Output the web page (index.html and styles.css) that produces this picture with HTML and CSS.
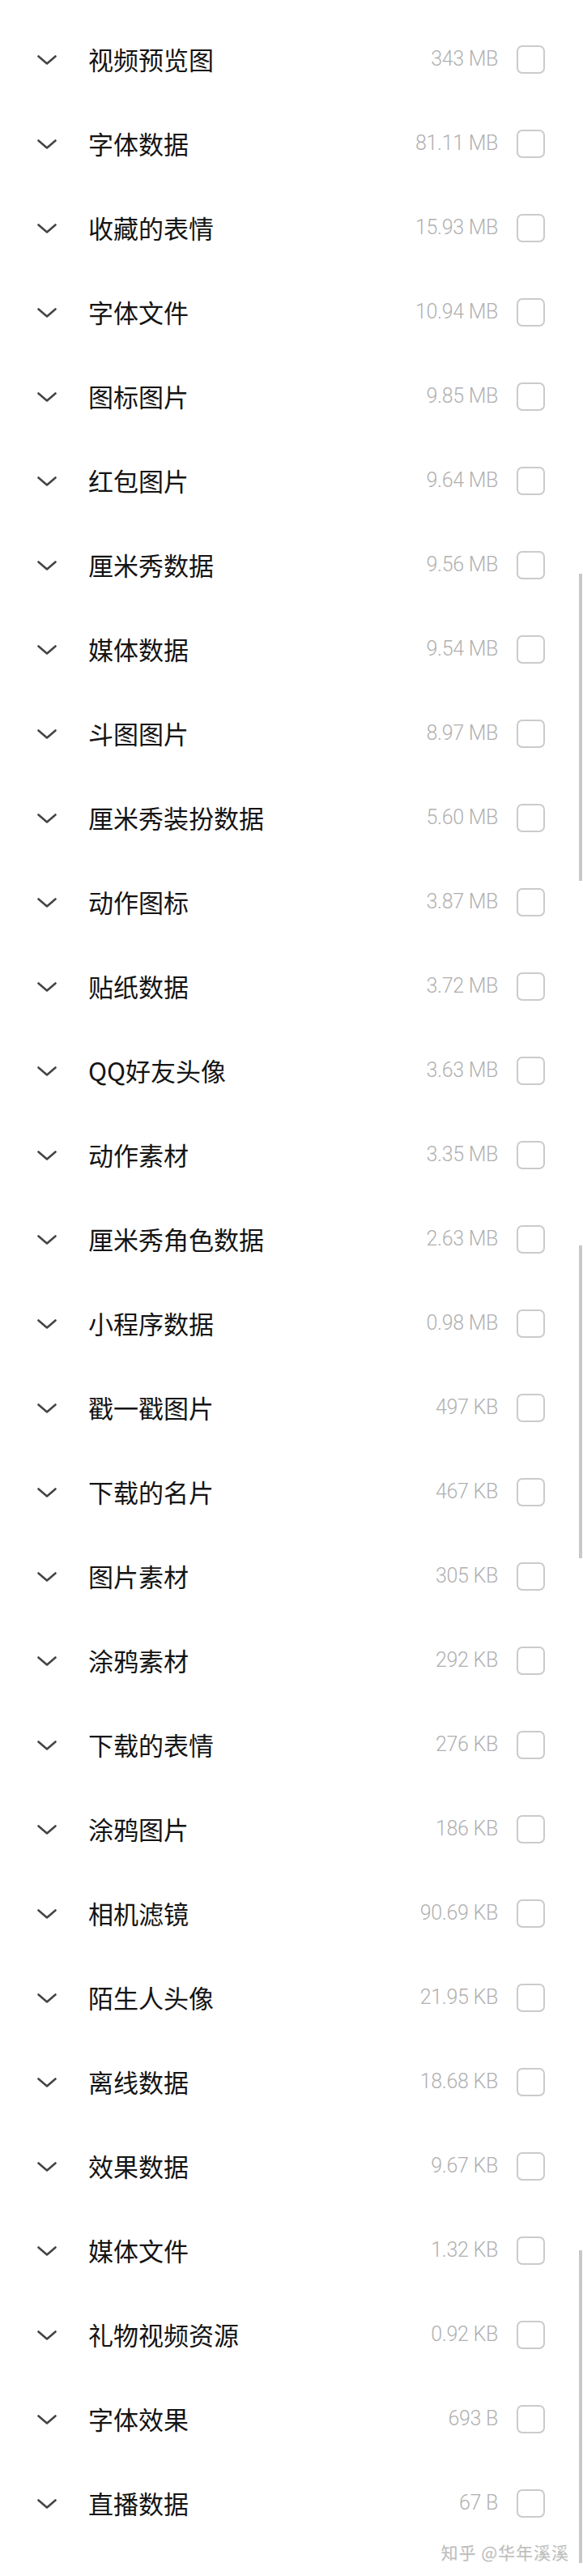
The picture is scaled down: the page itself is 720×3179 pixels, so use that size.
FILE: index.html
```html
<!DOCTYPE html>
<html lang="zh-CN">
<head>
<meta charset="utf-8">
<title>存储空间</title>
<link rel="stylesheet" href="styles.css">
</head>
<body>
<div class="page">
  <ul class="list" id="list">
    <li class="row"><span class="chev"><svg viewBox="0 0 24 12"><path d="M1.5 1.5 L12 10.5 L22.5 1.5"/></svg></span><span class="name">视频预览图</span><span class="size">343 MB</span><span class="box"></span></li>
    <li class="row"><span class="chev"><svg viewBox="0 0 24 12"><path d="M1.5 1.5 L12 10.5 L22.5 1.5"/></svg></span><span class="name">字体数据</span><span class="size">81.11 MB</span><span class="box"></span></li>
    <li class="row"><span class="chev"><svg viewBox="0 0 24 12"><path d="M1.5 1.5 L12 10.5 L22.5 1.5"/></svg></span><span class="name">收藏的表情</span><span class="size">15.93 MB</span><span class="box"></span></li>
    <li class="row"><span class="chev"><svg viewBox="0 0 24 12"><path d="M1.5 1.5 L12 10.5 L22.5 1.5"/></svg></span><span class="name">字体文件</span><span class="size">10.94 MB</span><span class="box"></span></li>
    <li class="row"><span class="chev"><svg viewBox="0 0 24 12"><path d="M1.5 1.5 L12 10.5 L22.5 1.5"/></svg></span><span class="name">图标图片</span><span class="size">9.85 MB</span><span class="box"></span></li>
    <li class="row"><span class="chev"><svg viewBox="0 0 24 12"><path d="M1.5 1.5 L12 10.5 L22.5 1.5"/></svg></span><span class="name">红包图片</span><span class="size">9.64 MB</span><span class="box"></span></li>
    <li class="row"><span class="chev"><svg viewBox="0 0 24 12"><path d="M1.5 1.5 L12 10.5 L22.5 1.5"/></svg></span><span class="name">厘米秀数据</span><span class="size">9.56 MB</span><span class="box"></span></li>
    <li class="row"><span class="chev"><svg viewBox="0 0 24 12"><path d="M1.5 1.5 L12 10.5 L22.5 1.5"/></svg></span><span class="name">媒体数据</span><span class="size">9.54 MB</span><span class="box"></span></li>
    <li class="row"><span class="chev"><svg viewBox="0 0 24 12"><path d="M1.5 1.5 L12 10.5 L22.5 1.5"/></svg></span><span class="name">斗图图片</span><span class="size">8.97 MB</span><span class="box"></span></li>
    <li class="row"><span class="chev"><svg viewBox="0 0 24 12"><path d="M1.5 1.5 L12 10.5 L22.5 1.5"/></svg></span><span class="name">厘米秀装扮数据</span><span class="size">5.60 MB</span><span class="box"></span></li>
    <li class="row"><span class="chev"><svg viewBox="0 0 24 12"><path d="M1.5 1.5 L12 10.5 L22.5 1.5"/></svg></span><span class="name">动作图标</span><span class="size">3.87 MB</span><span class="box"></span></li>
    <li class="row"><span class="chev"><svg viewBox="0 0 24 12"><path d="M1.5 1.5 L12 10.5 L22.5 1.5"/></svg></span><span class="name">贴纸数据</span><span class="size">3.72 MB</span><span class="box"></span></li>
    <li class="row"><span class="chev"><svg viewBox="0 0 24 12"><path d="M1.5 1.5 L12 10.5 L22.5 1.5"/></svg></span><span class="name">QQ好友头像</span><span class="size">3.63 MB</span><span class="box"></span></li>
    <li class="row"><span class="chev"><svg viewBox="0 0 24 12"><path d="M1.5 1.5 L12 10.5 L22.5 1.5"/></svg></span><span class="name">动作素材</span><span class="size">3.35 MB</span><span class="box"></span></li>
    <li class="row"><span class="chev"><svg viewBox="0 0 24 12"><path d="M1.5 1.5 L12 10.5 L22.5 1.5"/></svg></span><span class="name">厘米秀角色数据</span><span class="size">2.63 MB</span><span class="box"></span></li>
    <li class="row"><span class="chev"><svg viewBox="0 0 24 12"><path d="M1.5 1.5 L12 10.5 L22.5 1.5"/></svg></span><span class="name">小程序数据</span><span class="size">0.98 MB</span><span class="box"></span></li>
    <li class="row"><span class="chev"><svg viewBox="0 0 24 12"><path d="M1.5 1.5 L12 10.5 L22.5 1.5"/></svg></span><span class="name">戳一戳图片</span><span class="size">497 KB</span><span class="box"></span></li>
    <li class="row"><span class="chev"><svg viewBox="0 0 24 12"><path d="M1.5 1.5 L12 10.5 L22.5 1.5"/></svg></span><span class="name">下载的名片</span><span class="size">467 KB</span><span class="box"></span></li>
    <li class="row"><span class="chev"><svg viewBox="0 0 24 12"><path d="M1.5 1.5 L12 10.5 L22.5 1.5"/></svg></span><span class="name">图片素材</span><span class="size">305 KB</span><span class="box"></span></li>
    <li class="row"><span class="chev"><svg viewBox="0 0 24 12"><path d="M1.5 1.5 L12 10.5 L22.5 1.5"/></svg></span><span class="name">涂鸦素材</span><span class="size">292 KB</span><span class="box"></span></li>
    <li class="row"><span class="chev"><svg viewBox="0 0 24 12"><path d="M1.5 1.5 L12 10.5 L22.5 1.5"/></svg></span><span class="name">下载的表情</span><span class="size">276 KB</span><span class="box"></span></li>
    <li class="row"><span class="chev"><svg viewBox="0 0 24 12"><path d="M1.5 1.5 L12 10.5 L22.5 1.5"/></svg></span><span class="name">涂鸦图片</span><span class="size">186 KB</span><span class="box"></span></li>
    <li class="row"><span class="chev"><svg viewBox="0 0 24 12"><path d="M1.5 1.5 L12 10.5 L22.5 1.5"/></svg></span><span class="name">相机滤镜</span><span class="size">90.69 KB</span><span class="box"></span></li>
    <li class="row"><span class="chev"><svg viewBox="0 0 24 12"><path d="M1.5 1.5 L12 10.5 L22.5 1.5"/></svg></span><span class="name">陌生人头像</span><span class="size">21.95 KB</span><span class="box"></span></li>
    <li class="row"><span class="chev"><svg viewBox="0 0 24 12"><path d="M1.5 1.5 L12 10.5 L22.5 1.5"/></svg></span><span class="name">离线数据</span><span class="size">18.68 KB</span><span class="box"></span></li>
    <li class="row"><span class="chev"><svg viewBox="0 0 24 12"><path d="M1.5 1.5 L12 10.5 L22.5 1.5"/></svg></span><span class="name">效果数据</span><span class="size">9.67 KB</span><span class="box"></span></li>
    <li class="row"><span class="chev"><svg viewBox="0 0 24 12"><path d="M1.5 1.5 L12 10.5 L22.5 1.5"/></svg></span><span class="name">媒体文件</span><span class="size">1.32 KB</span><span class="box"></span></li>
    <li class="row"><span class="chev"><svg viewBox="0 0 24 12"><path d="M1.5 1.5 L12 10.5 L22.5 1.5"/></svg></span><span class="name">礼物视频资源</span><span class="size">0.92 KB</span><span class="box"></span></li>
    <li class="row"><span class="chev"><svg viewBox="0 0 24 12"><path d="M1.5 1.5 L12 10.5 L22.5 1.5"/></svg></span><span class="name">字体效果</span><span class="size">693 B</span><span class="box"></span></li>
    <li class="row"><span class="chev"><svg viewBox="0 0 24 12"><path d="M1.5 1.5 L12 10.5 L22.5 1.5"/></svg></span><span class="name">直播数据</span><span class="size">67 B</span><span class="box"></span></li>
  </ul>
  <div class="watermark">知乎 @华年溪溪</div>
  <div class="scrollbar sb1"></div>
  <div class="scrollbar sb2"></div>
  <div class="scrollbar sb3"></div>
</div>
</body>
</html>
```
FILE: styles.css
```css
html, body {
  margin: 0;
  padding: 0;
  background: #ffffff;
}
.page {
  position: relative;
  width: 720px;
  height: 3179px;
  overflow: hidden;
  background: #ffffff;
  font-family: "Noto Sans CJK SC", "Noto Sans", sans-serif;
}
.list {
  list-style: none;
  margin: 0;
  padding: 21px 0 0 0;
}
.row {
  display: flex;
  align-items: center;
  height: 104px;
  padding: 0 47px 0 46px;
}
.chev {
  display: flex;
  width: 24px;
  height: 12px;
  margin-top: 2px;
}
.chev svg {
  width: 24px;
  height: 12px;
  fill: none;
  stroke: #444444;
  stroke-width: 2.6;
  stroke-linecap: round;
  stroke-linejoin: round;
}
.name {
  margin-left: 39px;
  flex: 1;
  font-size: 31px;
  line-height: 40px;
  color: #141414;
}
.size {
  font-family: "Roboto", "Liberation Sans", sans-serif;
  font-size: 25px;
  line-height: 30px;
  color: #b0b0b0;
  font-weight: 300;
  letter-spacing: -0.3px;
}
.box {
  width: 31px;
  height: 31px;
  margin-left: 23px;
  border: 2px solid #cbcbcb;
  border-radius: 7px;
}
.watermark {
  margin-top: -5px;
  padding-right: 17px;
  text-align: right;
  font-size: 21px;
  line-height: 26px;
  letter-spacing: 1px;
  color: #bdbdbd;
  text-shadow: 1px 1px 0 rgba(0, 0, 0, 0.06);
}
.scrollbar {
  position: absolute;
  right: 1px;
  width: 4px;
  background: #c9c9c9;
}
.sb1 { top: 708px; height: 379px; }
.sb2 { top: 1537px; height: 386px; }
.sb3 { top: 2777px; height: 386px; }
```
